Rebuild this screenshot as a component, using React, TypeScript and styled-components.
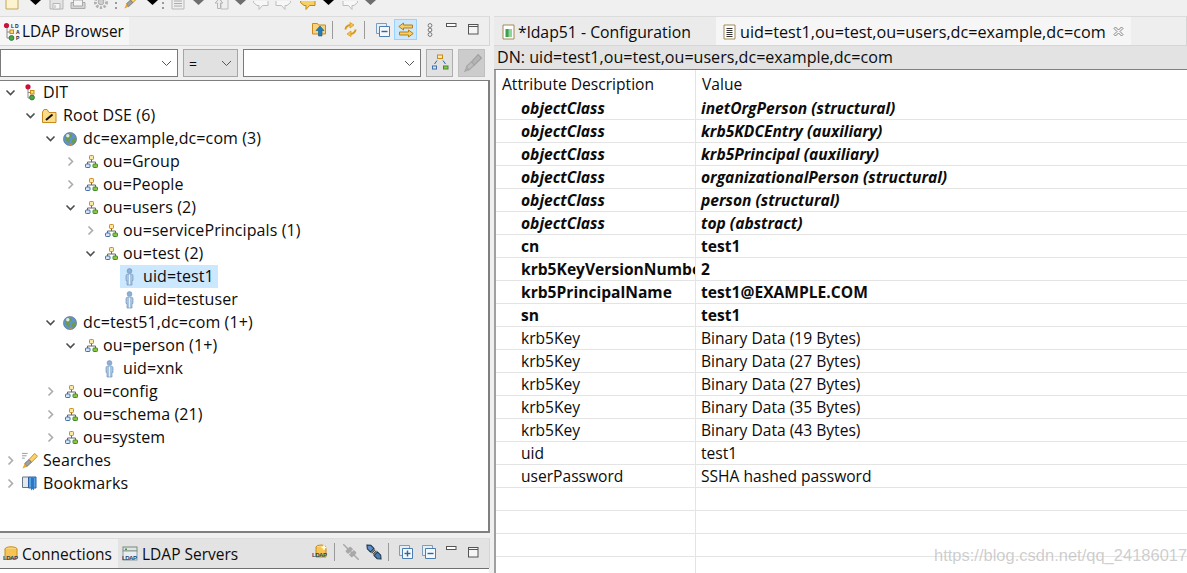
import React from "react";
import styled, { createGlobalStyle } from "styled-components";

const Global = createGlobalStyle`
  html, body { margin: 0; padding: 0; width: 1187px; height: 573px; overflow: hidden; background: #f0f0f0; }
  body { font-family: "Open Sans", "Noto Sans", "Liberation Sans", sans-serif; font-size: 16px; color: #0c0c0c; }
  svg text { font-family: "Liberation Sans", sans-serif; font-weight: 700; }
`;

const Page = styled.div`width: 1187px; height: 573px; position: relative; overflow: hidden; display: flex; flex-direction: column; background: #f0f0f0;`;
const Toolbar = styled.div`height: 16px; flex: none; overflow: hidden; display: flex; align-items: flex-end; padding: 0 0 6px 4px; box-sizing: border-box;`;
const ToolSlot = styled.span<{ $w?: number; $ml?: number }>`
  flex: none; display: flex; align-items: flex-end; justify-content: center; width: ${p => p.$w ?? 16}px; margin-left: ${p => p.$ml ?? 0}px; height: 16px;
`;
const ToolDots = styled.span<{ $ml: number }>`
  flex: none; width: 2px; height: 8px; margin-left: ${p => p.$ml}px; margin-bottom: 0; background: repeating-linear-gradient(to bottom, #9a9a9a 0 2px, transparent 2px 5px);
`;
const Work = styled.div`flex: 1; display: flex; min-height: 0;`;
const Left = styled.section`width: 490px; flex: none; display: flex; flex-direction: column;`;
const Right = styled.section`flex: 1; margin-left: 4px; display: flex; flex-direction: column; min-width: 0;`;
const TabBar = styled.div`
  height: 30px; flex: none; box-sizing: border-box; display: flex; align-items: stretch; background: #eeeeee;
  border-top: 1px solid #dcdcdc; border-bottom: 1px solid #d6d6d6; border-right: 1px solid #d6d6d6;
`;
const Tab = styled.div<{ $w: number; $bg?: string; $pad: number; $gap: number; $fs?: number }>`
  width: ${p => p.$w}px; flex: none; box-sizing: border-box; display: flex; align-items: center; gap: ${p => p.$gap}px; padding: 1px 0 0 ${p => p.$pad}px;
  background: ${p => p.$bg ?? "transparent"}; white-space: nowrap; font-size: ${p => p.$fs ?? 16}px;
`;
const CloseSlot = styled.span`margin-left: 3px; display: flex; align-items: center;`;
const Actions = styled.div`margin-left: auto; display: flex; align-items: center; height: 100%;`;
const Act = styled.span<{ $w?: number; $active?: boolean; $ml?: number }>`
  flex: none; width: ${p => p.$w ?? 16}px; height: 21px; margin-top: -3px; margin-left: ${p => p.$ml ?? 0}px; display: flex; align-items: center; justify-content: center; box-sizing: border-box;
  ${p => p.$active ? "background: #cce8ff; border: 1px solid #99d1ff;" : ""}
`;
const Sep = styled.span<{ $l: number; $r: number }>`flex: none; width: 1px; height: 18px; background: #9a9a9a; margin: -3px ${p => p.$r}px 0 ${p => p.$l}px;`;
const FilterRow = styled.div`height: 34px; flex: none; display: flex; align-items: flex-start; padding: 3px 3px 0 0; box-sizing: border-box; gap: 5px;`;
const Combo = styled.div<{ $w: number; $ro?: boolean }>`
  width: ${p => p.$w}px; height: 28px; box-sizing: border-box; flex: none; display: flex; align-items: center; justify-content: space-between;
  background: ${p => p.$ro ? "#e1e1e1" : "#fff"}; border: 1px solid ${p => p.$ro ? "#a6a6a6" : "#7a7a7a"}; padding: 0 5px;
  font-size: 14px;
`;
const SquareBtn = styled.div<{ $off?: boolean }>`
  width: 27px; height: 28px; flex: none; box-sizing: border-box; display: flex; align-items: center; justify-content: center;
  background: ${p => p.$off ? "#cccccc" : "#e1e1e1"}; border: 1px solid ${p => p.$off ? "#bfbfbf" : "#adadad"};
`;
const Tree = styled.div`
  flex: none; height: 453px; box-sizing: border-box; background: #fff; border-style: solid; border-color: #7f7f7f; border-width: 1px 2px 2px 0; overflow: hidden;
`;
const Row = styled.div<{ $depth: number }>`
  height: 23px; display: flex; align-items: center; padding-left: ${p => p.$depth * 20 + 3}px; white-space: nowrap;
`;
const Twisty = styled.span`width: 15px; height: 15px; flex: none; display: flex; align-items: center; justify-content: center;`;
const Node = styled.span<{ $sel?: boolean }>`
  display: flex; align-items: center; height: 23px; padding-right: 4px; margin-left: 2px;
  background: ${p => p.$sel ? "#cce8ff" : "transparent"};
`;
const NodeIcon = styled.span`width: 19px; margin-right: 4px; flex: none; display: flex; align-items: center; justify-content: center;`;
const NodeText = styled.span`position: relative; top: -1px; letter-spacing: 0.1px;`;
const OuSvg = styled.svg`margin-left: 3px;`;
const BottomBar = styled(TabBar)`margin-top: 5px; background: #e3e3e3; border-bottom: 0;`;
const BottomRest = styled.div`flex: 1; background: #fff; border-top: 1px solid #6f6f6f; margin-right: 1px;`;
const Dn = styled.div`height: 24px; flex: none; box-sizing: border-box; background: #e3e3e3; padding: 0 0 1px 3px; display: flex; align-items: center; font-size: 16.1px; border-bottom: 1px solid #808080;`;
const Table = styled.div`flex: 1; background: #fff; border-left: 2px solid #a0a0a0; overflow: hidden; min-height: 0; font-size: 15.6px;`;
const TRow = styled.div<{ $head?: boolean }>`
  display: grid; grid-template-columns: 200px 1fr; height: ${p => p.$head ? 27 : 23}px; box-sizing: border-box;
  ${p => p.$head ? "" : "border-bottom: 1px solid #e4e4e4;"}
`;
const Cell = styled.div<{ $kind?: "oc" | "bold" | "plain"; $attr?: boolean; $head?: boolean }>`
  display: flex; align-items: center; white-space: nowrap; overflow: hidden; box-sizing: border-box;
  padding-left: ${p => p.$attr ? (p.$head ? 6 : 25) : (p.$head ? 6 : 5)}px;
  ${p => p.$attr ? "border-right: 1px solid #e4e4e4;" : ""}
  font-weight: ${p => p.$kind === "oc" || p.$kind === "bold" ? 700 : 400};
  font-style: ${p => p.$kind === "oc" ? "italic" : "normal"};
`;
const Watermark = styled.div`
  position: absolute; left: 934px; top: 544px; font-family: "Liberation Sans", sans-serif; font-size: 16.5px; line-height: 22px; color: rgba(165,165,165,.55); text-shadow: 1px 1px 0 rgba(255,255,255,.6); pointer-events: none; white-space: nowrap;
`;

const Chevron = ({ open }: { open?: boolean }) => (
  <svg width="11" height="11" viewBox="0 0 11 11" fill="none" stroke={open ? "#4d4d4d" : "#ababab"} strokeWidth="1.6">
    {open ? <path d="M1.5 3.5 5.5 7.5 9.5 3.5" /> : <path d="M3.500 1.500 7.500 5.500 3.500 9.500" />}
  </svg>
);
const ComboArrow = () => (
  <svg width="11" height="7" viewBox="0 0 11 7" fill="none" stroke="#555" strokeWidth="1"><path d="M1 1l4.500 4.500L10 1" /></svg>
);
const OuIcon = () => (
  <OuSvg width="13" height="13" viewBox="0 0 13 13" fill="none">
    <path d="M6.500 4.500V7M2.500 9V7h8v2" stroke="#666" />
    <rect x="4.500" y=".5" width="4" height="4" rx=".8" fill="#fbe9a8" stroke="#c98a16" />
    <rect x=".5" y="9" width="4.500" height="3.500" rx=".8" fill="#d7e6f6" stroke="#3f6ea8" />
    <rect x="8" y="9" width="4.500" height="3.500" rx=".8" fill="#8cc63f" stroke="#3e8c2e" />
  </OuSvg>
);
const DitIcon = () => (
  <svg width="10" height="17" viewBox="0 0 10 17" fill="none">
    <path d="M3 5v9h3M3 8.500h3" stroke="#8a8a8a" />
    <circle cx="3" cy="2.800" r="2.600" fill="#c8143c" />
    <rect x="5.500" y="6.500" width="3.500" height="3.500" fill="#f6d77a" stroke="#c98a16" />
    <circle cx="7" cy="13.500" r="2.400" fill="#4ea64a" stroke="#2e7d32" />
  </svg>
);
const FolderIcon = () => (
  <svg width="15" height="14" viewBox="0 0 15 14" fill="none">
    <path d="M.5 3V13.500H14V3.500H7L5 .5H2z" fill="#fbdc88" stroke="#c88a1c" />
    <path d="M4 11 10.500 5.500" stroke="#111" strokeWidth="2" />
  </svg>
);
const GlobeIcon = () => (
  <svg width="14" height="14" viewBox="0 0 14 14">
    <circle cx="7" cy="7" r="6.600" fill="#5d94c9" stroke="#5a6f8a" strokeWidth=".6" />
    <path d="M3 3.500c2-1.500 4-1.500 6-1l-1 2.500-2 1 1 3-1 2-2-2-2-1.500zM9 7l3.500-1 .5 3-2.500 3L9 10z" fill="#6f9a4a" />
    <circle cx="4.800" cy="3.800" r="1.700" fill="#eef3f8" opacity=".9" />
    <path d="M5.500 12.800c1.500.5 3 .3 4-.4L8 11.200z" fill="#c48b3a" />
  </svg>
);
const PersonIcon = () => (
  <svg width="11" height="18" viewBox="0 0 11 18">
    <circle cx="5.500" cy="3" r="2.400" fill="#8fb0d6" stroke="#6a8db5" strokeWidth=".6" />
    <path d="M2 7.500c0-1 1-1.500 3.500-1.500S9 6.500 9 7.500v5H8v4.500H3V12.500H2z" fill="#a9c4e0" stroke="#7497bd" strokeWidth=".7" />
    <path d="M5.500 6.500v10" stroke="#e8f0f8" />
  </svg>
);
const WandIcon = ({ s = 18, off }: { s?: number; off?: boolean }) => (
  <svg width={s} height={s} viewBox="0 0 18 18" fill="none">
    {!off && <path d="M1 1.500h6M1 4h5M1 6.500h3" stroke="#8a9ab0" />}
    <path d="M8.500 8 14.500 1.500l3 3L11 11z" fill={off ? "#b4b4b4" : "#fbd36a"} stroke={off ? "#a0a0a0" : "#c98a16"} />
    <path d="M4 12 8.500 8 11 11 6 15.500z" fill={off ? "#bdbdbd" : "#a0a0a0"} stroke={off ? "#a6a6a6" : "#777"} />
    <path d="M1.500 17.500 4 12 6 15.500z" fill={off ? "#aaa" : "#e9a52a"} />
  </svg>
);
const BookIcon = () => (
  <svg width="15" height="15" viewBox="0 0 15 15" fill="none">
    <path d="M.5 1h6v10.500h-6z" fill="#e4e8ee" stroke="#6a7686" />
    <path d="M6.500 1H14v11H6.500z" fill="#5aa4e6" stroke="#2a5f9e" />
    <path d="M9 2v12.500l1.500-1.500L12 14.500V2z" fill="#2b76c8" />
  </svg>
);
const NewIcon = () => (
  <svg width="15" height="16" viewBox="0 0 15 16"><path d="M1 1h12v14H1z" fill="#fdf3cf" stroke="#c2a65a" /></svg>
);
const DownBlack = ({ dim }: { dim?: boolean }) => (
  <svg width="11" height="5" viewBox="0 0 11 5" style={{ marginBottom: 5 }}><path d="M0 0H11L5.500 5z" fill={dim ? "#6e6e6e" : "#000"} /></svg>
);
const SaveIcon = () => (
  <svg width="15" height="16" viewBox="0 0 15 16" fill="none"><path d="M1 1h13v14H1z" fill="#e4e4e4" stroke="#b5b5b5" /><path d="M4 9.500h7V15H4z" fill="#f5f5f5" stroke="#b5b5b5" /><path d="M6 11v3" stroke="#b5b5b5" /></svg>
);
const PrintIcon = () => (
  <svg width="16" height="16" viewBox="0 0 16 16" fill="none"><path d="M1 8.500h14v6H1z" fill="#d5d5d5" stroke="#aaa" /><path d="M3.500 6h9v6h-9z" fill="#f5f5f5" stroke="#aaa" /></svg>
);
const GearIcon = () => (
  <svg width="17" height="16" viewBox="0 0 17 16"><circle cx="8.500" cy="8" r="6" fill="none" stroke="#b0b0b0" strokeWidth="3" strokeDasharray="2.500 1.500" /><circle cx="8.500" cy="8" r="3" fill="#cfcfcf" stroke="#aaa" /></svg>
);
const DocIcon = () => (
  <svg width="15" height="16" viewBox="0 0 15 16" fill="none"><path d="M1 1h12v14H1z" fill="#efefef" stroke="#b8b8b8" /><path d="M3 7h8M3 9.500h8M3 12h8" stroke="#aaa" /></svg>
);
const UpIcon = () => (
  <svg width="15" height="16" viewBox="0 0 15 16" fill="none"><path d="M7 1h7v14H7z" fill="#efefef" stroke="#bbb" /><path d="M5 5 1 9h2.500v5.500h3V9H9z" fill="#ececec" stroke="#b5b5b5" /></svg>
);
const Bubble = ({ c = "#f7f7f7", b = "#bdbdbd", flip }: { c?: string; b?: string; flip?: boolean }) => (
  <svg width="16" height="9" viewBox="0 0 16 9" style={flip ? { transform: "scaleX(-1)" } : undefined}>
    <path d="M1 -3H15V4.500H9.500L6 8.500V4.500H4L.5 1.500z" fill={c} stroke={b} strokeLinejoin="round" />
  </svg>
);
const FolderUp = () => (
  <svg width="14" height="15" viewBox="0 0 14 15" fill="none">
    <path d="M.5 1.500h5l1 1.500h7v9H.5z" fill="#f9d27b" stroke="#c98a1c" />
    <path d="M8 4l4 4.500H10V14H6.500V8.500H4z" fill="#1f7fb8" stroke="#135a87" strokeWidth=".6" />
  </svg>
);
const SyncIcon = () => (
  <svg width="15" height="15" viewBox="0 0 15 15" fill="none" stroke="#d79a1e" strokeWidth="2">
    <path d="M2.500 7.500c0-2 2-4.500 5-4.500" /><path d="M7 .5 11 3 7 6z" fill="#f5c451" strokeWidth=".8" />
    <path d="M12.500 7.500c0 2-2 4.500-5 4.500" /><path d="M8 9 4 12l4 2.500z" fill="#f5c451" strokeWidth=".8" />
  </svg>
);
const CollapseIcon = ({ plus }: { plus?: boolean }) => (
  <svg width="14" height="14" viewBox="0 0 14 14" fill="none">
    <path d="M.5.500h10v10H.5z" fill="#e6eef6" stroke="#7d9dbf" />
    <path d="M3.500 3.500h10v10h-10z" fill="#f4f8fc" stroke="#4a7db0" />
    <path d="M5.500 8.500h6" stroke="#2d67a3" strokeWidth="1.400" />
    {plus && <path d="M8.500 5.500v6" stroke="#2d67a3" strokeWidth="1.400" />}
  </svg>
);
const LinkIcon = () => (
  <svg width="16" height="16" viewBox="0 0 16 16" fill="#f6cf66" stroke="#b57f12" strokeLinejoin="round">
    <path d="M5.500 1 .8 4.500 5.500 8V6h9V3h-9z" />
    <path d="M10.500 8l4.700 3.500L10.500 15v-2h-9v-3h9z" />
  </svg>
);
const Dots = () => (
  <svg width="6" height="14" viewBox="0 0 6 14" fill="#f4f4f4" stroke="#777">
    <circle cx="3" cy="2.500" r="1.900" /><circle cx="3" cy="7" r="1.900" /><circle cx="3" cy="11.500" r="1.900" />
  </svg>
);
const MinIcon = () => (
  <svg width="11" height="5" viewBox="0 0 11 5" style={{ marginTop: -8 }}><rect x=".5" y=".5" width="9.500" height="3" fill="#fff" stroke="#555" /></svg>
);
const MaxIcon = () => (
  <svg width="11" height="11" viewBox="0 0 11 11" fill="#f5f5f5" stroke="#555"><rect x=".5" y=".5" width="9.500" height="9.500" /><path d="M.5 2.500h9.500" /></svg>
);
const PlugOff = () => (
  <svg width="16" height="16" viewBox="0 0 16 16">
    <g transform="rotate(45 8 8)">
      <path d="M-3 8H19" stroke="#a8a8a8" strokeWidth="1.500" />
      <path d="M4 4.500h3.500v7H4c-1.200-1-1.200-6 0-7zM8.500 4.500H12c1.200 1 1.200 6 0 7H8.500z" fill="#a8a8a8" />
    </g>
  </svg>
);
const PlugOn = () => (
  <svg width="16" height="16" viewBox="0 0 16 16" stroke="#1c2f44">
    <g transform="rotate(45 8 8)">
      <path d="M-2 8 1 5.500H5.500V10.500H1z" fill="#5d8fc2" />
      <path d="M18 8 15 5.500H10.500V10.500H15z" fill="#4a7db0" />
      <path d="M7 5.500v5M9 5.500v5" stroke="#333" />
    </g>
  </svg>
);
const TinyLdap = ({ y, size = 6 }: { y: number; size?: number }) => (
  <text x="0" y={y} fontSize={size} fill="#1d456b" textLength="15">LDAP</text>
);
const LdapGlyph = () => (
  <svg width="16" height="16" viewBox="0 0 16 16">
    <ellipse cx="9" cy="3" rx="5" ry="2" fill="#f9d57c" stroke="#c98a1c" />
    <path d="M4 3v10h10V3" fill="#f5c451" stroke="#c98a1c" />
    <path d="M12 1v5M9.500 3.500h5" stroke="#fff" strokeWidth="1.400" />
    <TinyLdap y={13} />
  </svg>
);
const ConnIcon = ({ servers }: { servers?: boolean }) => (
  <svg width="16" height="16" viewBox="0 0 16 16">
    {servers ? (
      <>
        <rect x="1" y="1" width="14" height="4" fill="#dde6dd" stroke="#7c8a7c" />
        <rect x="1" y="5" width="14" height="9" fill="#e8eef0" stroke="#8a9aa0" />
        <rect x="3" y="2.500" width="2" height="1.500" fill="#3c9b3c" />
      </>
    ) : (
      <>
        <ellipse cx="8" cy="3" rx="6" ry="2.200" fill="#f9d57c" stroke="#c98a1c" />
        <path d="M2 3v10h12V3" fill="#f5c451" stroke="#c98a1c" />
      </>
    )}
    <TinyLdap y={14} />
  </svg>
);
const LdapBrowserIcon = () => (
  <svg width="18" height="20" viewBox="0 0 18 20" fill="none">
    <path d="M5 5v11h4M5 10h4" stroke="#8a8a8a" />
    <circle cx="4.500" cy="3.500" r="2.600" fill="#c8143c" />
    <rect x="8" y="8" width="3.500" height="3.500" fill="#f6d77a" stroke="#c98a16" />
    <circle cx="9.500" cy="16" r="2.400" fill="#4ea64a" stroke="#2e7d32" />
    <text x="9" y="6" fontSize="5" fill="#223">L</text>
    <text x="13" y="6" fontSize="5" fill="#223">D</text>
    <text x="14" y="12" fontSize="5" fill="#223">A</text>
    <text x="14" y="18" fontSize="5" fill="#223">P</text>
  </svg>
);
const CfgIcon = () => (
  <svg width="13" height="16" viewBox="0 0 13 16">
    <path d="M1 1h11v14H1z" fill="#fff" stroke="#a08a52" />
    <rect x="3.500" y="5" width="6" height="8" fill="#3aa04a" />
    <rect x="6.500" y="5" width="3" height="8" fill="#8fd29a" />
  </svg>
);
const EntryIcon = () => (
  <svg width="13" height="16" viewBox="0 0 13 16">
    <path d="M1 1h11v14H1z" fill="#fff" stroke="#a08a52" />
    <path d="M3.500 4.500h6M3.500 6.500h6M3.500 8.500h6M3.500 10.500h6M3.500 12.500h6" stroke="#333" strokeWidth="1.100" />
  </svg>
);
const CloseX = () => (
  <svg width="11" height="11" viewBox="0 0 11 11" fill="#f4f4f4" stroke="#777" strokeWidth=".9">
    <path d="M1 2.500 2.500 1l3 3 3-3L10 2.500l-3 3 3 3L8.500 10l-3-3-3 3L1 8.500l3-3z" />
  </svg>
);
const DiffIcon = () => (
  <svg width="18" height="18" viewBox="0 0 18 18" fill="none">
    <rect x="6.500" y="1" width="5" height="3.500" fill="#fbe9a8" stroke="#c98a16" />
    <rect x="1.500" y="12" width="4" height="3" fill="#d7e6f6" stroke="#3f6ea8" />
    <rect x="12.500" y="12" width="4.500" height="3" fill="#8cc63f" stroke="#3e8c2e" />
    <path d="M6 6.500 3.500 10M12 6.500 14.500 10" stroke="#2d67a3" />
  </svg>
);

type Kind = "dit" | "folder" | "globe" | "ou" | "person" | "search" | "book";
const icons: Record<Kind, React.ReactNode> = {
  dit: <DitIcon />, folder: <FolderIcon />, globe: <GlobeIcon />, ou: <OuIcon />, person: <PersonIcon />, search: <WandIcon s={17} />, book: <BookIcon />,
};
const tree: { d: number; o?: boolean; i: Kind; t: string; sel?: boolean }[] = [
  { d: 0, o: true, i: "dit", t: "DIT" },
  { d: 1, o: true, i: "folder", t: "Root DSE (6)" },
  { d: 2, o: true, i: "globe", t: "dc=example,dc=com (3)" },
  { d: 3, o: false, i: "ou", t: "ou=Group" },
  { d: 3, o: false, i: "ou", t: "ou=People" },
  { d: 3, o: true, i: "ou", t: "ou=users (2)" },
  { d: 4, o: false, i: "ou", t: "ou=servicePrincipals (1)" },
  { d: 4, o: true, i: "ou", t: "ou=test (2)" },
  { d: 5, i: "person", t: "uid=test1", sel: true },
  { d: 5, i: "person", t: "uid=testuser" },
  { d: 2, o: true, i: "globe", t: "dc=test51,dc=com (1+)" },
  { d: 3, o: true, i: "ou", t: "ou=person (1+)" },
  { d: 4, i: "person", t: "uid=xnk" },
  { d: 2, o: false, i: "ou", t: "ou=config" },
  { d: 2, o: false, i: "ou", t: "ou=schema (21)" },
  { d: 2, o: false, i: "ou", t: "ou=system" },
  { d: 0, o: false, i: "search", t: "Searches" },
  { d: 0, o: false, i: "book", t: "Bookmarks" },
];
const rows: [string, string, "oc" | "bold" | "plain"][] = [
  ["objectClass", "inetOrgPerson (structural)", "oc"],
  ["objectClass", "krb5KDCEntry (auxiliary)", "oc"],
  ["objectClass", "krb5Principal (auxiliary)", "oc"],
  ["objectClass", "organizationalPerson (structural)", "oc"],
  ["objectClass", "person (structural)", "oc"],
  ["objectClass", "top (abstract)", "oc"],
  ["cn", "test1", "bold"],
  ["krb5KeyVersionNumber", "2", "bold"],
  ["krb5PrincipalName", "test1@EXAMPLE.COM", "bold"],
  ["sn", "test1", "bold"],
  ["krb5Key", "Binary Data (19 Bytes)", "plain"],
  ["krb5Key", "Binary Data (27 Bytes)", "plain"],
  ["krb5Key", "Binary Data (27 Bytes)", "plain"],
  ["krb5Key", "Binary Data (35 Bytes)", "plain"],
  ["krb5Key", "Binary Data (43 Bytes)", "plain"],
  ["uid", "test1", "plain"],
  ["userPassword", "SSHA hashed password", "plain"],
  ["", "", "plain"], ["", "", "plain"], ["", "", "plain"], ["", "", "plain"],
];

export default function App() {
  return (
    <Page>
      <Global />
      <Toolbar>
        <ToolSlot><NewIcon /></ToolSlot>
        <ToolSlot $w={11} $ml={10}><DownBlack /></ToolSlot>
        <ToolSlot $ml={7}><SaveIcon /></ToolSlot>
        <ToolSlot $ml={6}><PrintIcon /></ToolSlot>
        <ToolSlot $ml={7}><GearIcon /></ToolSlot>
        <ToolDots $ml={6} />
        <ToolSlot $ml={6}><WandIcon /></ToolSlot>
        <ToolSlot $w={11} $ml={8}><DownBlack /></ToolSlot>
        <ToolDots $ml={4} />
        <ToolSlot $ml={6}><DocIcon /></ToolSlot>
        <ToolSlot $w={11} $ml={7}><DownBlack dim /></ToolSlot>
        <ToolSlot $ml={9}><UpIcon /></ToolSlot>
        <ToolSlot $w={11} $ml={6}><DownBlack dim /></ToolSlot>
        <ToolSlot $ml={7}><Bubble /></ToolSlot>
        <ToolSlot $ml={6}><Bubble flip /></ToolSlot>
        <ToolSlot $ml={9}><Bubble c="#f8cf62" b="#b98a14" /></ToolSlot>
        <ToolSlot $w={11} $ml={7}><DownBlack /></ToolSlot>
        <ToolSlot $ml={8}><Bubble flip /></ToolSlot>
        <ToolSlot $w={11} $ml={7}><DownBlack dim /></ToolSlot>
      </Toolbar>
      <Work>
        <Left>
          <TabBar>
            <Tab $w={129} $bg="#f6f6f6" $pad={2} $gap={2} $fs={15.4}><LdapBrowserIcon />LDAP Browser</Tab>
            <Actions>
              <Act><FolderUp /></Act>
              <Sep $l={5} $r={9} />
              <Act><SyncIcon /></Act>
              <Sep $l={6} $r={10} />
              <Act><CollapseIcon /></Act>
              <Act $w={23} $active $ml={3}><LinkIcon /></Act>
              <Act $w={25}><Dots /></Act>
              <Act $w={19}><MinIcon /></Act>
              <Act $w={24}><MaxIcon /></Act>
              <Act $w={4} />
            </Actions>
          </TabBar>
          <FilterRow>
            <Combo $w={178}><span /><ComboArrow /></Combo>
            <Combo $w={55} $ro><span>=</span><ComboArrow /></Combo>
            <Combo $w={178}><span /><ComboArrow /></Combo>
            <SquareBtn><DiffIcon /></SquareBtn>
            <SquareBtn $off><WandIcon s={20} off /></SquareBtn>
          </FilterRow>
          <Tree>
            {tree.map((n, i) => (
              <Row key={i} $depth={n.d}>
                <Twisty>{n.o !== undefined && <Chevron open={n.o} />}</Twisty>
                <Node $sel={n.sel}><NodeIcon>{icons[n.i]}</NodeIcon><NodeText>{n.t}</NodeText></Node>
              </Row>
            ))}
          </Tree>
          <BottomBar>
            <Tab $w={118} $bg="#f0f0f0" $pad={3} $gap={3} $fs={15.5}><ConnIcon />Connections</Tab>
            <Tab $w={122} $pad={4} $gap={4} $fs={15.5}><ConnIcon servers />LDAP Servers</Tab>
            <Actions>
              <Act><LdapGlyph /></Act>
              <Sep $l={6} $r={8} />
              <Act><PlugOff /></Act>
              <Act $ml={7}><PlugOn /></Act>
              <Sep $l={6} $r={5} />
              <Act $w={23}><CollapseIcon plus /></Act>
              <Act $w={24}><CollapseIcon /></Act>
              <Act $w={20}><MinIcon /></Act>
              <Act $w={24}><MaxIcon /></Act>
              <Act $w={4} />
            </Actions>
          </BottomBar>
          <BottomRest />
        </Left>
        <Right>
          <TabBar>
            <Tab $w={222} $bg="#ebebeb" $pad={8} $gap={3} $fs={15.8}><CfgIcon />*ldap51 - Configuration</Tab>
            <Tab $w={415} $bg="#f6f6f6" $pad={7} $gap={4} $fs={16.2}><EntryIcon />uid=test1,ou=test,ou=users,dc=example,dc=com<CloseSlot><CloseX /></CloseSlot></Tab>
          </TabBar>
          <Dn>DN: uid=test1,ou=test,ou=users,dc=example,dc=com</Dn>
          <Table>
            <TRow $head><Cell $attr $head>Attribute Description</Cell><Cell $head>Value</Cell></TRow>
            {rows.map((r, i) => (
              <TRow key={i}>
                <Cell $attr $kind={r[2]}>{r[0]}</Cell>
                <Cell $kind={r[2]}>{r[1]}</Cell>
              </TRow>
            ))}
          </Table>
        </Right>
      </Work>
      <Watermark>https://blog.csdn.net/qq_24186017</Watermark>
    </Page>
  );
}
